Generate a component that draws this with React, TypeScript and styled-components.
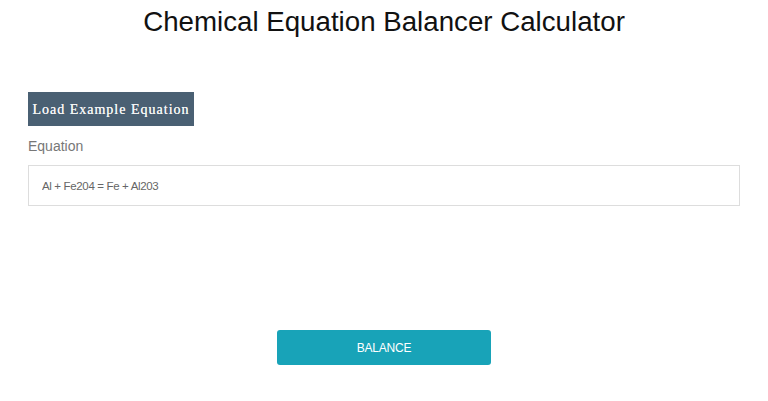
import styled, { createGlobalStyle } from "styled-components";

const GlobalStyle = createGlobalStyle`
  body {
    margin: 0;
    background: #fff;
    font-family: "Liberation Sans", Arial, sans-serif;
  }
`;

const Page = styled.div`
  width: 768px;
  height: 401px;
  padding: 0 28px;
  box-sizing: border-box;
  display: flex;
  flex-direction: column;
`;

const Title = styled.h1`
  margin: 6px 0 0;
  font-size: 27.7px;
  font-weight: 400;
  line-height: 32px;
  color: #111;
  text-align: center;
`;

const LoadButton = styled.button`
  align-self: flex-start;
  margin-top: 54px;
  width: 166px;
  height: 34px;
  padding: 1px 0 0;
  border: none;
  background: #4a6073;
  color: #f4f4f4;
  font-family: "Liberation Serif", "Times New Roman", serif;
  font-size: 14px;
  font-weight: 400;
  letter-spacing: 1px;
  text-shadow: 0 0 0.4px #fff;
`;

const Label = styled.label`
  margin-top: 12px;
  font-size: 14px;
  line-height: 16px;
  color: #777;
`;

const Input = styled.input`
  margin-top: 11px;
  width: 712px;
  height: 41px;
  box-sizing: border-box;
  border: 1px solid #ddd;
  padding: 0 13px;
  font-family: "Liberation Sans", Arial, sans-serif;
  font-size: 11.5px;
  letter-spacing: -0.35px;
  color: #666;
  outline: none;
`;

const Footer = styled.div`
  margin-top: 124px;
  display: flex;
  justify-content: center;
`;

const BalanceButton = styled.button`
  width: 214px;
  height: 35px;
  border: none;
  border-radius: 3px;
  background: #18a3b8;
  color: #fff;
  font-family: "Liberation Sans", Arial, sans-serif;
  font-size: 12px;
  letter-spacing: -0.2px;
`;

export default function App() {
  return (
    <>
      <GlobalStyle />
      <Page>
        <Title>Chemical Equation Balancer Calculator</Title>
        <LoadButton>Load Example Equation</LoadButton>
        <Label>Equation</Label>
        <Input defaultValue="Al + Fe204 = Fe + Al203" />
        <Footer>
          <BalanceButton>BALANCE</BalanceButton>
        </Footer>
      </Page>
    </>
  );
}
